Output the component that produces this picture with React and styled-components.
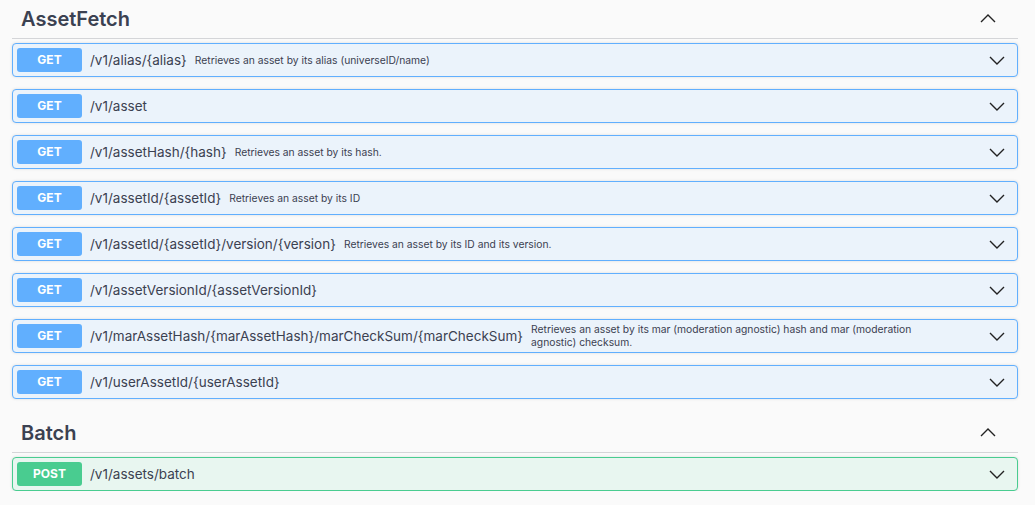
import styled, { createGlobalStyle } from "styled-components";

const Global = createGlobalStyle`
  body { margin: 0; background: #fafafa; font-family: Inter, "Noto Sans", sans-serif; color: #3b4151; }
`

const Page = styled.div`
  padding: 0 17px 0 12px;
`

const TagHeader = styled.div`
  display: flex;
  align-items: center;
  justify-content: space-between;
  height: 38px;
  margin-top: ${(p) => p.top}px;
  padding: 0 20px 0 9px;
  border-bottom: 1px solid rgba(59, 65, 81, 0.2);
  h3 { margin: 0; font-size: 20px; font-weight: 600; color: #3b4151; }
`

const Row = styled.div`
  display: flex;
  align-items: center;
  min-height: 32px;
  margin-top: ${(p) => p.first ? 4 : 12}px;
  padding: 0 10px 0 4px;
  border: 1px solid ${(p) => p.color};
  border-radius: 4px;
  background: ${(p) => p.bg};
  box-shadow: 0 0 3px rgba(0, 0, 0, 0.12);
`

const Badge = styled.span`
  flex: none;
  width: 65px;
  height: 24px;
  line-height: 24px;
  text-align: center;
  border-radius: 3px;
  background: ${(p) => p.color};
  color: #fff;
  font-size: 12px;
  font-weight: 700;
`

const Path = styled.span`
  flex: none;
  margin-left: 8px;
  font-size: 13.5px;
  color: #3b4151;
`

const Desc = styled.span`
  flex: 1;
  margin-left: 8px;
  padding-right: 40px;
  font-size: 10.3px;
  line-height: 13px;
  color: #3b4151;
`

const Chevron = ({ up }) => (
  <svg width="20" height="20" viewBox="0 0 20 20" style={{ flex: "none" }}>
    <path d={up ? "M3 13l7-7 7 7" : "M3 7l7 7 7-7"} fill="none" stroke="#222" strokeWidth="1.4" />
  </svg>
)

const blue = { color: "#61affe", bg: "#ebf3fb" }
const green = { color: "#49cc90", bg: "#e8f6f0" }

const fetchOps = [
  ["/v1/alias/{alias}", "Retrieves an asset by its alias (universeID/name)"],
  ["/v1/asset", ""],
  ["/v1/assetHash/{hash}", "Retrieves an asset by its hash."],
  ["/v1/assetId/{assetId}", "Retrieves an asset by its ID"],
  ["/v1/assetId/{assetId}/version/{version}", "Retrieves an asset by its ID and its version."],
  ["/v1/assetVersionId/{assetVersionId}", ""],
  ["/v1/marAssetHash/{marAssetHash}/marCheckSum/{marCheckSum}", "Retrieves an asset by its mar (moderation agnostic) hash and mar (moderation agnostic) checksum."],
  ["/v1/userAssetId/{userAssetId}", ""],
]

const Op = ({ method, path, desc, first, c }) => (
  <Row first={first} color={c.color} bg={c.bg}>
    <Badge color={c.color}>{method}</Badge>
    <Path>{path}</Path>
    <Desc>{desc}</Desc>
    <Chevron />
  </Row>
)

export default function App() {
  return (
    <Page>
      <Global />
      <TagHeader top={0}>
        <h3>AssetFetch</h3>
        <Chevron up />
      </TagHeader>
      {fetchOps.map(([p, d], i) => (
        <Op key={p} method="GET" path={p} desc={d} first={i === 0} c={blue} />
      ))}
      <TagHeader top={15}>
        <h3>Batch</h3>
        <Chevron up />
      </TagHeader>
      <Op method="POST" path="/v1/assets/batch" desc="" first c={green} />
    </Page>
  )
}
